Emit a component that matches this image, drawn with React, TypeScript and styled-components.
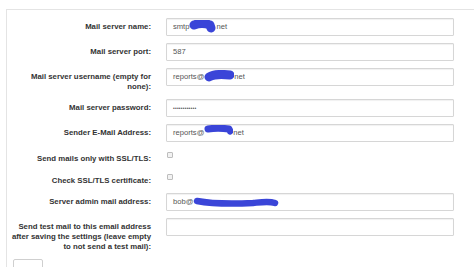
import React from 'react';
import styled, { createGlobalStyle } from 'styled-components';

const GlobalStyle = createGlobalStyle`
  html, body {
    margin: 0;
    padding: 0;
    background: #ffffff;
    font-family: "Liberation Sans", Arial, sans-serif;
  }
`;

const Page = styled.div`
  width: 474px;
  height: 267px;
  overflow: hidden;
  padding: 9px 0 0 6px;
  box-sizing: border-box;
`;

const Panel = styled.div`
  border-top: 1px solid #e4e4e4;
  border-left: 1px solid #e4e4e4;
  padding-top: 8px;
`;

const Row = styled.div<{ $check?: boolean }>`
  display: grid;
  grid-template-columns: 144px 288px;
  column-gap: 15px;
  align-items: start;
  margin-bottom: 7.5px;
  min-height: ${(p) => (p.$check ? '14.5px' : '0')};
`;

const Label = styled.label<{ $check?: boolean }>`
  text-align: right;
  font-weight: bold;
  font-size: 7.8px;
  line-height: 10px;
  color: #333;
  padding-top: ${(p) => (p.$check ? '4.5px' : '3.5px')};
`;

const Field = styled.div`
  height: 17.5px;
  box-sizing: border-box;
  border: 1px solid #d6d6d6;
  border-radius: 1px;
  box-shadow: inset 0 1px 1px rgba(0, 0, 0, 0.06);
  padding: 0 6px;
  display: flex;
  align-items: center;
  font-size: 7.6px;
  color: #555;
  white-space: nowrap;
`;

const Dots = styled.span`
  font-size: 5px;
  letter-spacing: 0.2px;
  color: #555;
`;

const Box = styled.div`
  width: 6px;
  height: 6px;
  margin: 3px 0 0 1px;
  border: 1px solid #bdbdbd;
  border-radius: 1px;
  background: #f2f2f2;
  box-sizing: border-box;
`;

const Scribble = styled.svg`
  display: inline-block;
  flex: none;
`;

const Button = styled.button`
  margin: 0 0 0 6px;
  width: 30px;
  height: 16px;
  border: 1px solid #cfcfcf;
  border-radius: 2px;
  background: #fff;
  font-family: "Liberation Sans", Arial, sans-serif;
  font-size: 7.5px;
  color: #333;
  padding: 4px 0 0;
  display: block;
  text-align: center;
`;

const BLUE = '#3a45d8';

const Blob = ({ w, h, d, sw, my = 0 }: { w: number; h: number; d: string; sw: number; my?: number }) => (
  <Scribble width={w} height={h} viewBox={`0 0 ${w} ${h}`} style={{ marginTop: my }}>
    <path d={d} stroke={BLUE} strokeWidth={sw} strokeLinecap="round" strokeLinejoin="round" fill="none" />
  </Scribble>
);

const App = () => {
  return (
    <Page>
      <GlobalStyle />
      <Panel>
        <Row>
          <Label>Mail server name:</Label>
          <Field>
            smtp
            <Blob w={27} h={13} d="M5 5 C10 3 16 3 21 5 L22 8" sw={9} />
            net
          </Field>
        </Row>
        <Row>
          <Label>Mail server port:</Label>
          <Field>587</Field>
        </Row>
        <Row>
          <Label>
            Mail server username (empty for
            <br />
            none):
          </Label>
          <Field>
            reports@
            <Blob w={30} h={13} d="M5 7 C10 4 18 4 26 5" sw={9} />
            net
          </Field>
        </Row>
        <Row>
          <Label>Mail server password:</Label>
          <Field>
            <Dots>••••••••••••</Dots>
          </Field>
        </Row>
        <Row>
          <Label>Sender E-Mail Address:</Label>
          <Field>
            reports@
            <Blob w={29} h={12} d="M4 4 C10 3 18 3 25 4 L26 6" sw={7} my={-4} />
            net
          </Field>
        </Row>
        <Row $check>
          <Label $check>Send mails only with SSL/TLS:</Label>
          <Box />
        </Row>
        <Row $check>
          <Label $check>Check SSL/TLS certificate:</Label>
          <Box />
        </Row>
        <Row>
          <Label>Server admin mail address:</Label>
          <Field>
            bob@
            <Blob w={86} h={12} d="M4 5 C20 8 40 8 60 7 C70 6 76 5 82 7" sw={6.5} />
          </Field>
        </Row>
        <Row>
          <Label>
            Send test mail to this email address
            <br />
            after saving the settings (leave empty
            <br />
            to not send a test mail):
          </Label>
          <Field />
        </Row>
        <Button>Save</Button>
      </Panel>
    </Page>
  );
};

export default App;
